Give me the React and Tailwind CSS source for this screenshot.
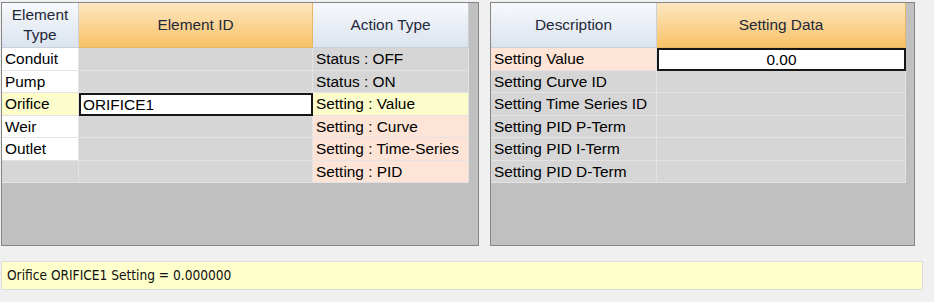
import React from "react";

const leftRows = [
  { type: "Conduit", id: "", action: "Status : OFF", typeBg: "bg-white", actBg: "bg-[#d6d6d6]" },
  { type: "Pump", id: "", action: "Status : ON", typeBg: "bg-white", actBg: "bg-[#d6d6d6]" },
  { type: "Orifice", id: "ORIFICE1", action: "Setting : Value", typeBg: "bg-[#fdfccb]", actBg: "bg-[#fdfccb]", edit: true },
  { type: "Weir", id: "", action: "Setting : Curve", typeBg: "bg-white", actBg: "bg-[#fde4d6]" },
  { type: "Outlet", id: "", action: "Setting : Time-Series", typeBg: "bg-white", actBg: "bg-[#fde4d6]" },
  { type: "", id: "", action: "Setting : PID", typeBg: "bg-[#d6d6d6]", actBg: "bg-[#fde4d6]" },
];

const rightRows = [
  { desc: "Setting Value", descBg: "bg-[#fde4d6]", value: "0.00", edit: true },
  { desc: "Setting Curve ID", descBg: "bg-[#d6d6d6]" },
  { desc: "Setting Time Series ID", descBg: "bg-[#d6d6d6]" },
  { desc: "Setting PID P-Term", descBg: "bg-[#d6d6d6]" },
  { desc: "Setting PID I-Term", descBg: "bg-[#d6d6d6]" },
  { desc: "Setting PID D-Term", descBg: "bg-[#d6d6d6]" },
];

const blueHead =
  "flex items-center justify-center text-center leading-[20px] text-[#1e2838] bg-gradient-to-b from-[#f7f9fc] to-[#dbe4ee] border-r border-b border-[#c9d2dc]";
const orangeHead =
  "flex items-center justify-center text-center text-[#1e2838] bg-gradient-to-b from-[#fde7c0] to-[#f7c164] border-r border-b border-[#e9b664]";
const cell = "h-[22.5px] flex items-center px-[3px] border-r border-b border-[#e3e3e3] whitespace-nowrap overflow-hidden";

export default function App() {
  return (
    <div
      className="w-[934px] h-[302px] bg-[#f0f0f0] pt-[2px] pl-[1px] text-[15.4px] text-black"
      style={{ fontFamily: '"Liberation Sans", Arial, sans-serif' }}
    >
      <div className="flex gap-[11px]">
        {/* Left grid */}
        <div className="w-[478px] h-[244px] border border-[#858585] bg-[#c0c0c0]">
          <div className="w-[467px] grid grid-cols-[77px_234px_156px]">
            <div className={`${blueHead} h-[45px]`}>
              Element
              <br />
              Type
            </div>
            <div className={`${orangeHead} h-[45px]`}>Element ID</div>
            <div className={`${blueHead} h-[45px]`}>Action Type</div>
            {leftRows.map((r, i) => (
              <React.Fragment key={i}>
                <div className={`${cell} ${r.typeBg}`}>{r.type}</div>
                {r.edit ? (
                  <div className="h-[22.5px] flex items-center px-[2px] bg-white border-2 border-[#161616]">
                    {r.id}
                  </div>
                ) : (
                  <div className={`${cell} bg-[#d6d6d6]`}>{r.id}</div>
                )}
                <div className={`${cell} ${r.actBg}`}>{r.action}</div>
              </React.Fragment>
            ))}
          </div>
        </div>

        {/* Right grid */}
        <div className="w-[425px] h-[244px] border border-[#858585] bg-[#c0c0c0]">
          <div className="w-[415px] grid grid-cols-[166px_249px]">
            <div className={`${blueHead} h-[45px]`}>Description</div>
            <div className={`${orangeHead} h-[45px]`}>Setting Data</div>
            {rightRows.map((r, i) => (
              <React.Fragment key={i}>
                <div className={`${cell} ${r.descBg}`}>{r.desc}</div>
                {r.edit ? (
                  <div className="h-[22.5px] flex items-center justify-center bg-white border-2 border-[#161616]">
                    {r.value}
                  </div>
                ) : (
                  <div className={`${cell} bg-[#d6d6d6]`}></div>
                )}
              </React.Fragment>
            ))}
          </div>
        </div>
      </div>

      {/* Status bar */}
      <div
        className="mt-[15px] w-[922px] h-[29px] flex items-center px-[5px] bg-[#ffffcb] border border-[#dcdcdc] text-[13.6px] text-[#111]"
        style={{ fontFamily: '"DejaVu Sans Condensed", "DejaVu Sans", sans-serif' }}
      >
        Orifice ORIFICE1 Setting = 0.000000
      </div>
    </div>
  );
}
